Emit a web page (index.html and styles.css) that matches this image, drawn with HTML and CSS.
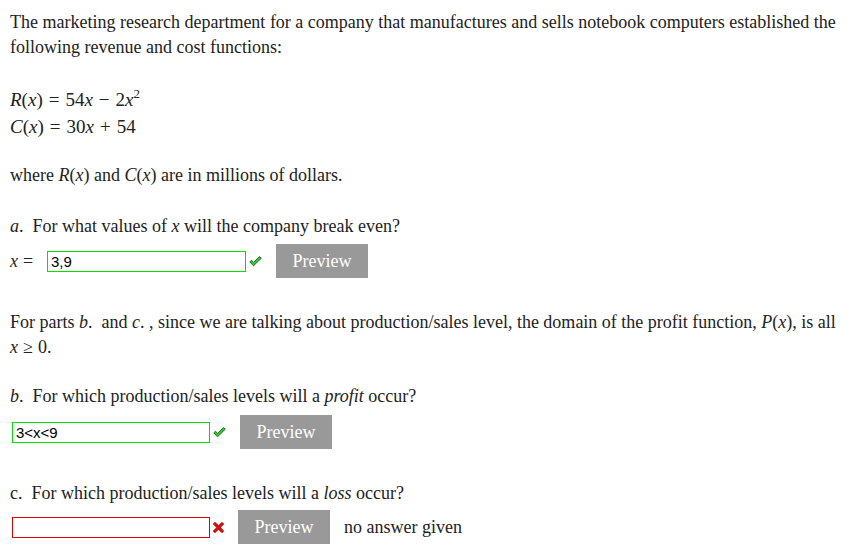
FILE: index.html
```html
<!DOCTYPE html>
<html>
<head>
<meta charset="utf-8">
<link rel="stylesheet" href="styles.css">
</head>
<body>
<div class="page">
  <p class="intro">The marketing research department for a company that manufactures and sells notebook computers established the following revenue and cost functions:</p>
  <div class="equations">
    <div class="eq"><span class="mi">R</span>(<span class="mi">x</span>)<span class="op">=</span>54<span class="mi">x</span><span class="op">−</span>2<span class="mi">x</span><sup>2</sup></div>
    <div class="eq"><span class="mi">C</span>(<span class="mi">x</span>)<span class="op">=</span>30<span class="mi">x</span><span class="op">+</span>54</div>
  </div>
  <p class="where">where <span class="m"><span class="mi">R</span>(<span class="mi">x</span>)</span> and <span class="m"><span class="mi">C</span>(<span class="mi">x</span>)</span> are in millions of dollars.</p>

  <p class="q q-a"><span class="mi">a</span>.&nbsp; For what values of <span class="mi">x</span> will the company break even?</p>
  <div class="row row-a">
    <span class="lhs"><span class="mi">x</span><span class="op">=</span></span>
    <span class="field ok">3,9</span>
    <span class="mark"><svg width="13" height="11" viewBox="0 0 13 11"><path d="M0.8 5.8 L4.5 9.8 L12.3 2.2 L10.4 0.6 L4.5 6.4 L2.6 4.2 Z" fill="#2ec82e" stroke="#1f5f1f" stroke-width="0.9" stroke-linejoin="round"/></svg></span>
    <span class="btn">Preview</span>
  </div>

  <p class="parts">For parts <span class="mi">b</span>.&nbsp; and <span class="mi">c</span>. , since we are talking about production/sales level, the domain of the profit function, <span class="mi">P</span>(<span class="mi">x</span>), is all <span class="mi">x</span><span class="op">≥</span>0.</p>

  <p class="q q-b"><span class="mi">b</span>.&nbsp; For which production/sales levels will a <em>profit</em> occur?</p>
  <div class="row row-b">
    <span class="field ok">3&lt;x&lt;9</span>
    <span class="mark"><svg width="13" height="11" viewBox="0 0 13 11"><path d="M0.8 5.8 L4.5 9.8 L12.3 2.2 L10.4 0.6 L4.5 6.4 L2.6 4.2 Z" fill="#2ec82e" stroke="#1f5f1f" stroke-width="0.9" stroke-linejoin="round"/></svg></span>
    <span class="btn">Preview</span>
  </div>

  <p class="q q-c">c.&nbsp; For which production/sales levels will a <em>loss</em> occur?</p>
  <div class="row row-c">
    <span class="field bad"></span>
    <span class="mark"><svg width="11" height="11" viewBox="0 0 11 11"><path d="M2 2 L9 9 M9 2 L2 9" stroke="#d01010" stroke-width="3.2" stroke-linecap="square"/></svg></span>
    <span class="btn">Preview</span>
    <span class="noans">no answer given</span>
  </div>
</div>
</body>
</html>
```
FILE: styles.css
```css
html, body {
  margin: 0;
  padding: 0;
  background: #fff;
}
.page {
  padding: 10px 10px 0 10px;
  font-family: "Liberation Serif", "Times New Roman", serif;
  font-size: 18px;
  line-height: 25px;
  color: #222;
}
p { margin: 0; }
.mi {
  font-family: "Liberation Serif", "Times New Roman", serif;
  font-style: italic;
}
.op { padding: 0 5px; }
.equations {
  margin-top: 26px;
  font-size: 19px;
  line-height: 27px;
}
.equations .op { padding: 0 6px; }
sup {
  font-size: 13px;
  line-height: 0;
  vertical-align: 8px;
}
.where { margin-top: 23px; }
.q-a { margin-top: 26px; }
.row {
  display: flex;
  align-items: center;
  height: 34px;
}
.row-a { margin-top: 5px; }
.row-b { margin-top: 6px; padding-left: 2px; }
.row-c { margin-top: 4px; padding-left: 2px; }
.lhs {
  width: 37px;
  font-family: "Liberation Serif", "Times New Roman", serif;
  font-size: 18px;
}
.field {
  box-sizing: border-box;
  width: 199px;
  height: 21px;
  border: 1px solid #00e000;
  font-family: "Liberation Sans", Arial, sans-serif;
  font-size: 15px;
  line-height: 19px;
  padding-left: 3px;
  color: #000;
}
.field.bad { border-color: #e00000; width: 198px; }
.row-b .field { width: 198px; }
.mark {
  display: flex;
  width: 16px;
  padding-left: 3px;
  box-sizing: border-box;
}
.row-a .btn { margin-left: 14px; }
.row-b .btn { margin-left: 14px; }
.row-c .btn { margin-left: 12px; }
.btn {
  background: #999;
  color: #fff;
  height: 34px;
  width: 92px;
  display: flex;
  align-items: center;
  justify-content: center;
  font-size: 18px;
}
.noans { margin-left: 14px; }
.parts { margin-top: 32px; }
.q-b { margin-top: 24px; }
.q-c { margin-top: 32px; }
```
